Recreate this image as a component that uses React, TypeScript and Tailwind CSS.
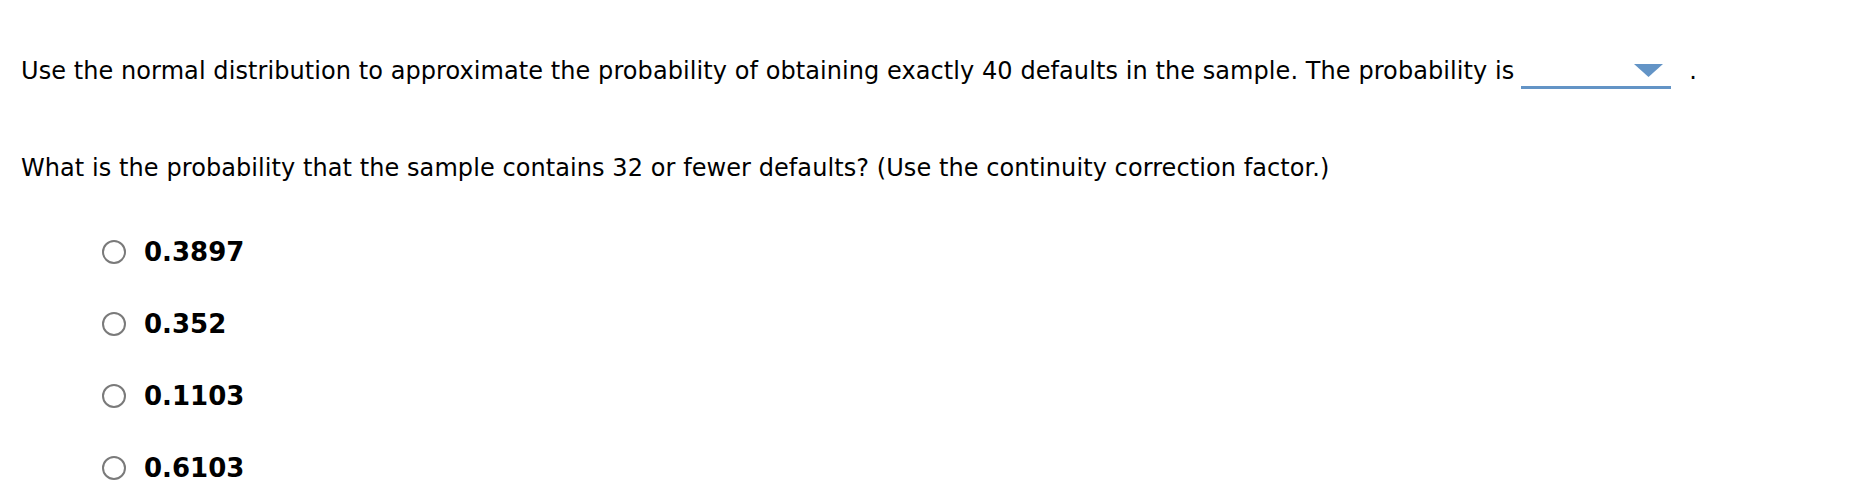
const options = ["0.3897", "0.352", "0.1103", "0.6103"];

function Dropdown() {
	return (
		<span className="inline-flex relative w-[150px] h-[28px] align-[-10px] border-b-[3px] border-[#6394c6] ml-[7px] mr-[10px]">
			<svg className="absolute right-[8px] top-[3px]" width="29" height="13" viewBox="0 0 29 13">
				<polygon points="0,0 29,0 14.5,13" fill="#6394c6" />
			</svg>
		</span>
	);
}

export default function App() {
	return (
		<div className="bg-white w-[1852px] h-[504px] text-black font-['DejaVu_Sans',Verdana,sans-serif] text-[24px] tracking-[0.075px] pl-[21px] pt-[56px]">
			<p className="leading-[30px] whitespace-nowrap">
				Use the normal distribution to approximate the probability of obtaining exactly 40 defaults in the sample. The probability is
				<Dropdown />
				<span className="ml-[8px]">.</span>
			</p>
			<p className="mt-[64px] leading-[30px] whitespace-nowrap">
				What is the probability that the sample contains 32 or fewer defaults? (Use the continuity correction factor.)
			</p>
			<div className="mt-[54px] pl-[81px] flex flex-col gap-[42px]">
				{options.map((o) => (
					<label key={o} className="flex items-center gap-[18px] h-[30px]">
						<span className="w-[24px] h-[24px] rounded-full border-[2px] border-[#7a7a7a] bg-white" />
						<span className="font-bold text-[26px] tracking-normal">{o}</span>
					</label>
				))}
			</div>
		</div>
	);
}
